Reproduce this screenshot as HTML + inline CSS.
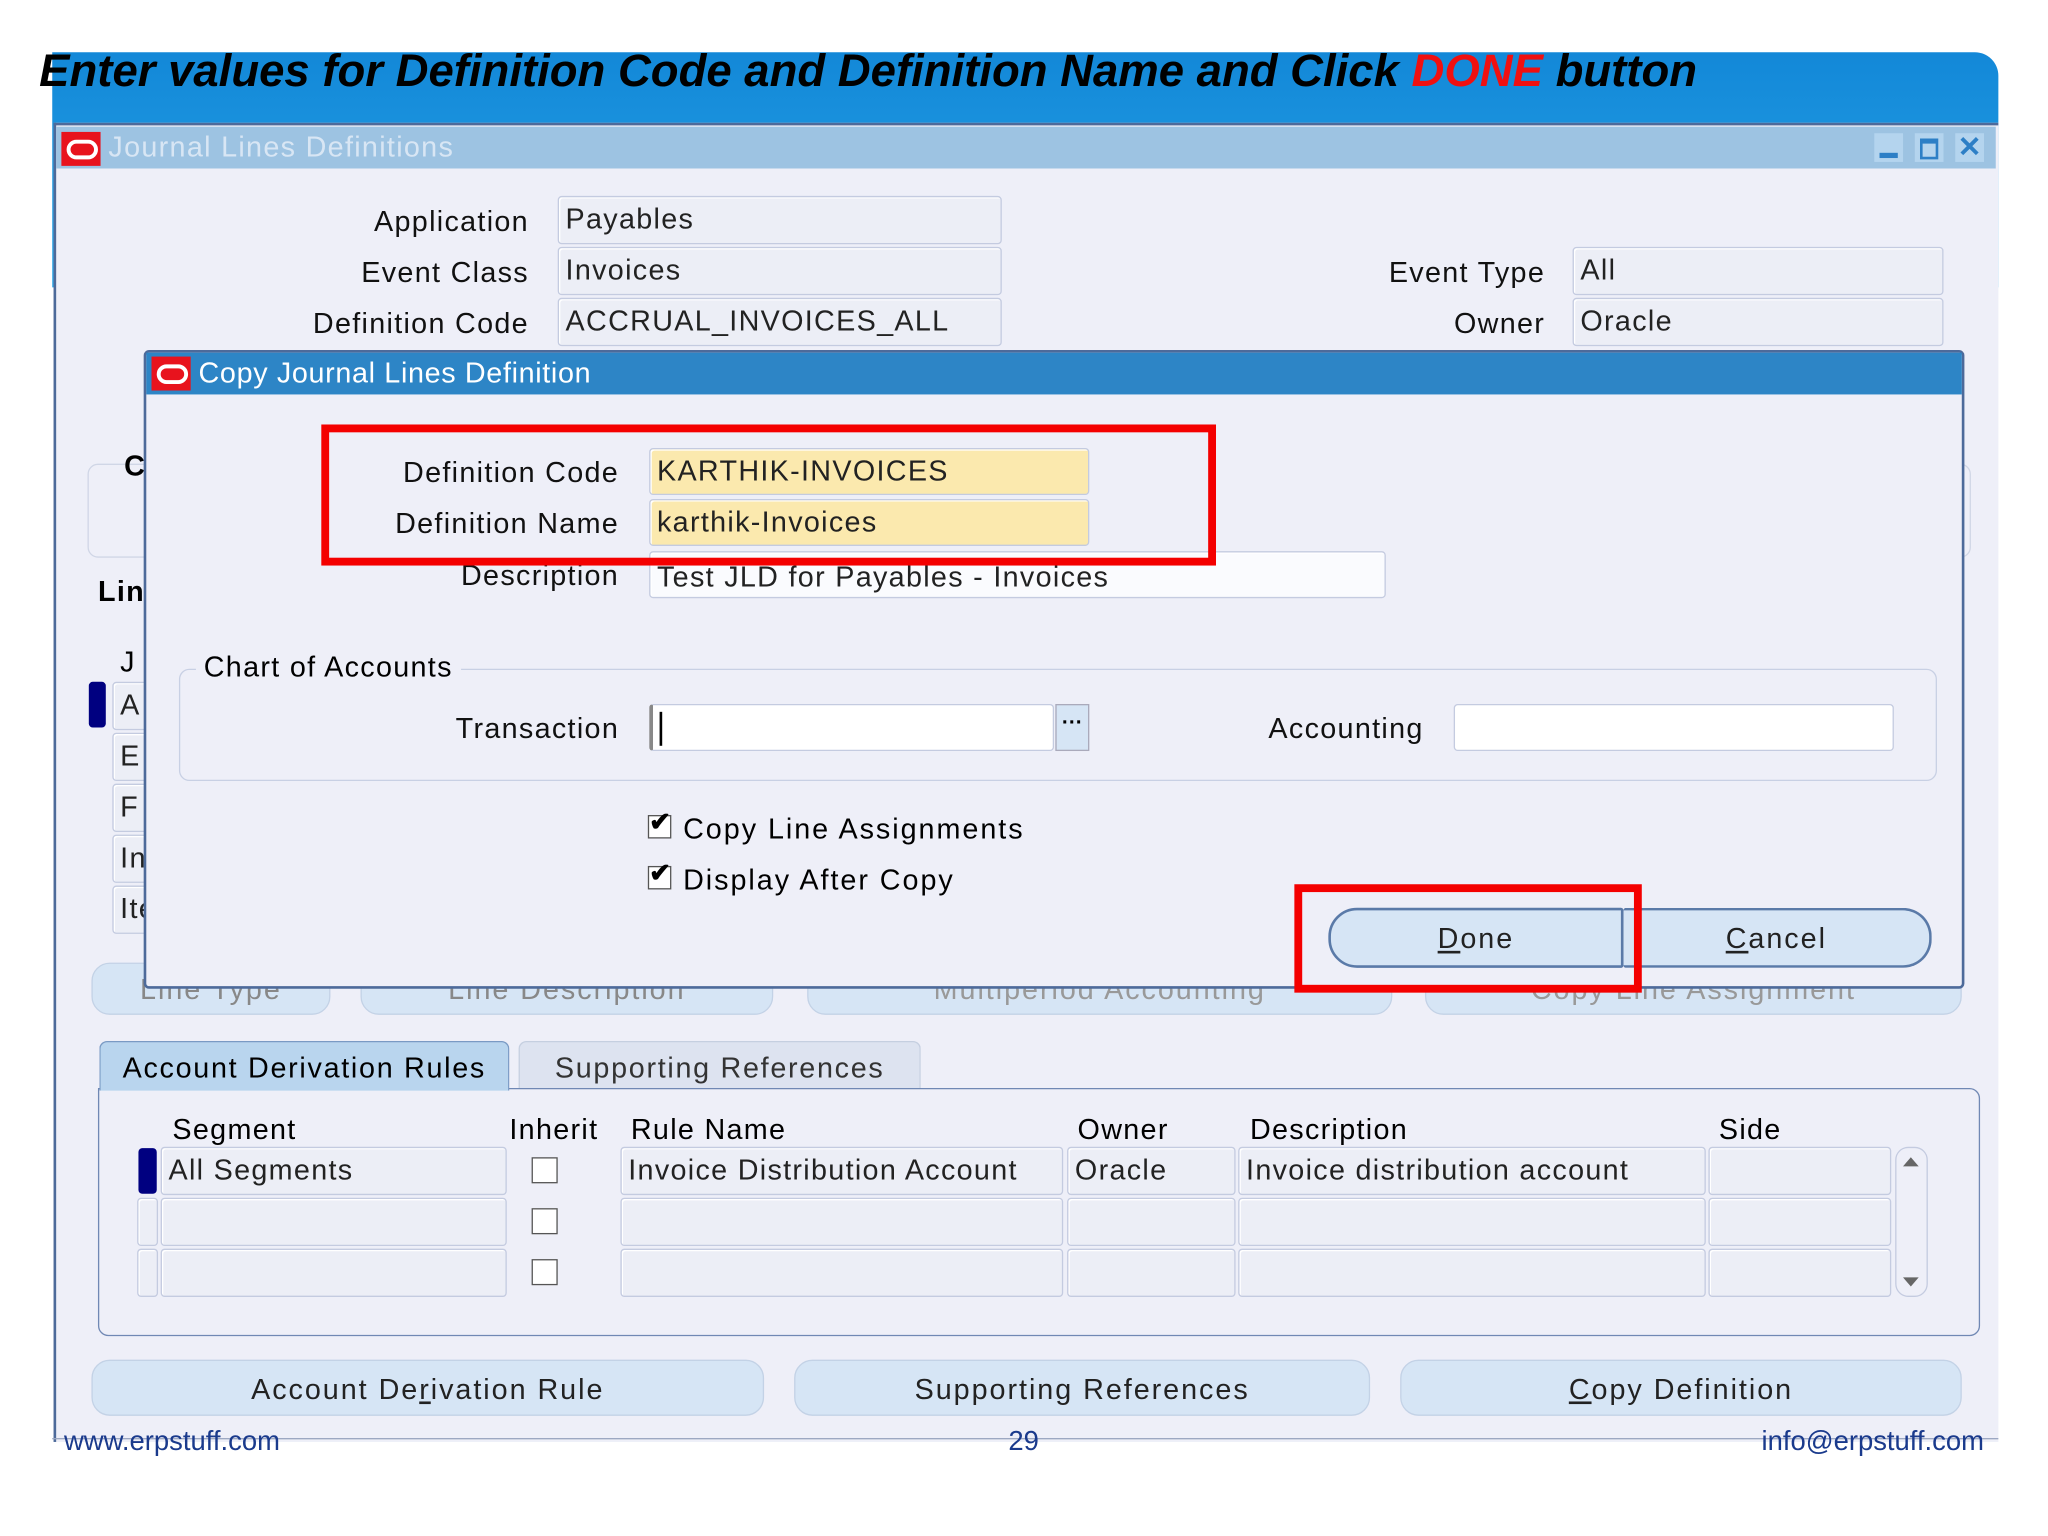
<!DOCTYPE html>
<html><head><meta charset="utf-8"><style>
html,body{margin:0;padding:0;background:#fff;width:2048px;height:1536px;overflow:hidden}
#w{position:absolute;left:0;top:0;width:1568px;height:1176px;transform:scale(1.30612);transform-origin:0 0;font-family:"Liberation Sans",sans-serif}
.a{position:absolute}
.lbl{position:absolute;font-size:22px;color:#111;letter-spacing:1px;white-space:nowrap;text-align:right}
.fld{position:absolute;background:#eceef6;border:1px solid #c4cbe0;border-radius:3px;box-shadow:inset 1px 1px 0 #fff;font-size:22px;letter-spacing:1px;color:#222;padding-left:5px;box-sizing:border-box;white-space:nowrap;overflow:hidden;line-height:34px}
.btn{position:absolute;background:#d6e5f5;border:1px solid #c3d2e6;border-radius:14px;font-size:22px;letter-spacing:1.5px;color:#222;text-align:center;box-sizing:border-box;white-space:nowrap;overflow:hidden}
.cb{position:absolute;width:18px;height:18px;border:1px solid #555;background:#fff;box-sizing:border-box}
</style></head><body><div id="w">
<!-- banner -->
<div class="a" style="left:40px;top:40px;width:1490px;height:180px;border-radius:0 18px 0 0;background:linear-gradient(#1388d8,#26a4e6)"></div>
<div class="a" style="left:30px;top:35px;font-size:35px;font-weight:bold;font-style:italic;color:#000;white-space:nowrap;transform:scaleX(0.995);transform-origin:0 0">Enter values for Definition Code and Definition Name and Click <span style="color:#f01010">DONE</span> button</div>
<!-- main window -->
<div class="a" style="left:41px;top:94px;width:1487px;height:1008px;background:#eeeff8;border-left:2px solid #4d6a9a;border-top:2px solid #4d6a9a"></div>
<div class="a" style="left:43px;top:97px;width:1485px;height:32px;background:#9dc3e2"></div>
<div class="a" style="left:47px;top:101px;width:30px;height:26px;background:#e8131d"><div style="margin:6px 4px;width:18px;height:9px;border:3px solid #fff;border-radius:8px"></div></div>
<div class="a" style="left:83px;top:100px;font-size:22px;color:#d8e6f4;letter-spacing:1px">Journal Lines Definitions</div>
<div class="a" style="left:1435px;top:102px;width:22px;height:22px;background:#b4d4ee"><div style="margin:15px 4px 0;height:4px;background:#2d7fc6"></div></div>
<div class="a" style="left:1466px;top:102px;width:22px;height:22px;background:#b4d4ee"><div style="margin:4px;height:10px;border:2px solid #2d7fc6;border-top-width:4px"></div></div>
<div class="a" style="left:1497px;top:102px;width:22px;height:22px;background:#b4d4ee;color:#2d7fc6;font-size:22px;font-weight:bold;text-align:center;line-height:22px">✕</div>
<div class="lbl" style="right:1163px;top:157px">Application</div>
<div class="lbl" style="right:1163px;top:196px">Event Class</div>
<div class="lbl" style="right:1163px;top:235px">Definition Code</div>
<div class="fld" style="left:427px;top:150px;width:340px;height:37px">Payables</div>
<div class="fld" style="left:427px;top:189px;width:340px;height:37px">Invoices</div>
<div class="fld" style="left:427px;top:228px;width:340px;height:37px">ACCRUAL_INVOICES_ALL</div>
<div class="lbl" style="right:385px;top:196px">Event Type</div>
<div class="lbl" style="right:385px;top:235px">Owner</div>
<div class="fld" style="left:1204px;top:189px;width:284px;height:37px">All</div>
<div class="fld" style="left:1204px;top:228px;width:284px;height:37px">Oracle</div>
<!-- background partial -->
<div class="a" style="left:67px;top:355px;width:1440px;height:70px;border:1px solid #d0d6e6;border-radius:8px"></div>
<div class="a" style="left:95px;top:344px;font-size:22px;font-weight:bold">C</div>
<div class="a" style="left:75px;top:440px;font-size:22px;font-weight:bold;letter-spacing:1px">Lin</div>
<div class="a" style="left:92px;top:494px;font-size:22px">J</div>
<div class="a" style="left:68px;top:522px;width:13px;height:35px;background:#000080;border-radius:3px"></div>
<div class="fld" style="left:86px;top:522px;width:40px;height:37px">A</div>
<div class="fld" style="left:86px;top:561px;width:40px;height:37px">E</div>
<div class="fld" style="left:86px;top:600px;width:40px;height:37px">F</div>
<div class="fld" style="left:86px;top:639px;width:40px;height:37px">In</div>
<div class="fld" style="left:86px;top:678px;width:40px;height:37px">Ite</div>
<div class="btn" style="left:70px;top:737px;width:183px;height:40px;line-height:40px;color:#888">Line Type</div>
<div class="btn" style="left:276px;top:737px;width:316px;height:40px;line-height:40px;color:#888">Line Description</div>
<div class="btn" style="left:618px;top:737px;width:448px;height:40px;line-height:40px;color:#999">Multiperiod Accounting</div>
<div class="btn" style="left:1091px;top:737px;width:411px;height:40px;line-height:40px;color:#999">Copy Line Assignment</div>
<!-- dialog -->
<div class="a" style="left:110px;top:268px;width:1394px;height:489px;background:#eeeff8;border:2px solid #4d6a9a;border-radius:4px;box-sizing:border-box"></div>
<div class="a" style="left:112px;top:270px;width:1390px;height:32px;background:#2d85c6"></div>
<div class="a" style="left:116px;top:273px;width:30px;height:26px;background:#e8131d"><div style="margin:6px 4px;width:18px;height:9px;border:3px solid #fff;border-radius:8px"></div></div>
<div class="a" style="left:152px;top:273px;font-size:22px;color:#fff;letter-spacing:0.5px">Copy Journal Lines Definition</div>
<div class="lbl" style="right:1094px;top:349px">Definition Code</div>
<div class="lbl" style="right:1094px;top:388px">Definition Name</div>
<div class="lbl" style="right:1094px;top:428px">Description</div>
<div class="fld" style="left:497px;top:343px;width:337px;height:36px;background:#fbe9ae;line-height:34px">KARTHIK-INVOICES</div>
<div class="fld" style="left:497px;top:382px;width:337px;height:36px;background:#fbe9ae;line-height:34px">karthik-Invoices</div>
<div class="fld" style="left:497px;top:422px;width:564px;height:36px;background:#fafbfe;line-height:38px">Test JLD for Payables - Invoices</div>
<div class="a" style="left:246px;top:325px;width:685px;height:108px;border:6px solid #f40000;box-sizing:border-box"></div>
<div class="a" style="left:137px;top:512px;width:1346px;height:86px;border:1px solid #c8d0e4;border-radius:8px;box-sizing:border-box"></div>
<div class="a" style="left:150px;top:498px;background:#eeeff8;padding:0 6px;font-size:22px;letter-spacing:1px">Chart of Accounts</div>
<div class="lbl" style="right:1094px;top:545px">Transaction</div>
<div class="fld" style="left:497px;top:539px;width:310px;height:36px;background:#fff;border-left:3px solid #888"><span style="display:inline-block;width:2px;height:26px;background:#000;vertical-align:middle"></span></div>
<div class="a" style="left:808px;top:539px;width:26px;height:36px;background:#d6e5f5;border:1px solid #aab;box-sizing:border-box;font-size:16px;font-weight:bold;text-align:center;line-height:28px">···</div>
<div class="lbl" style="right:478px;top:545px">Accounting</div>
<div class="fld" style="left:1113px;top:539px;width:337px;height:36px;background:#fff"></div>
<div class="cb" style="left:496px;top:624px"></div><div class="a" style="left:497px;top:617px;font-size:20px;font-weight:bold">✔</div>
<div class="cb" style="left:496px;top:663px"></div><div class="a" style="left:497px;top:656px;font-size:20px;font-weight:bold">✔</div>
<div class="a" style="left:523px;top:622px;font-size:22px;letter-spacing:1.5px">Copy Line Assignments</div>
<div class="a" style="left:523px;top:661px;font-size:22px;letter-spacing:1.5px">Display After Copy</div>
<div class="btn" style="left:1017px;top:695px;width:226px;height:46px;line-height:44px;border:2px solid #5a7aa8;border-radius:22px 2px 2px 22px"><u>D</u>one</div>
<div class="btn" style="left:1243px;top:695px;width:236px;height:46px;line-height:44px;border:2px solid #5a7aa8;border-left:none;border-radius:2px 22px 22px 2px"><u>C</u>ancel</div>
<div class="a" style="left:991px;top:677px;width:266px;height:83px;border:6px solid #f40000;box-sizing:border-box"></div>
<!-- tabs -->
<div class="a" style="left:75px;top:833px;width:1441px;height:190px;border:1px solid #7088b4;border-radius:0 8px 8px 8px;box-sizing:border-box"></div>
<div class="a" style="left:76px;top:797px;width:314px;height:38px;background:#b9d5ee;border:1px solid #7a9ac4;border-bottom:none;border-radius:6px 6px 0 0;box-sizing:border-box;font-size:22px;letter-spacing:1.3px;text-align:center;line-height:40px">Account Derivation Rules</div>
<div class="a" style="left:397px;top:797px;width:308px;height:36px;background:#dde3f0;border:1px solid #c5cfe0;border-bottom:none;border-radius:6px 6px 0 0;box-sizing:border-box;font-size:22px;letter-spacing:1.3px;text-align:center;line-height:40px;color:#333">Supporting References</div>
<div class="a" style="left:132px;top:852px;font-size:22px;letter-spacing:1px">Segment</div>
<div class="a" style="left:390px;top:852px;font-size:22px;letter-spacing:1px">Inherit</div>
<div class="a" style="left:483px;top:852px;font-size:22px;letter-spacing:1px">Rule Name</div>
<div class="a" style="left:825px;top:852px;font-size:22px;letter-spacing:1px">Owner</div>
<div class="a" style="left:957px;top:852px;font-size:22px;letter-spacing:1px">Description</div>
<div class="a" style="left:1316px;top:852px;font-size:22px;letter-spacing:1px">Side</div>
<div class="a" style="left:106px;top:879px;width:14px;height:35px;background:#000080;border-radius:3px"></div>
<div class="fld" style="left:105px;top:917px;width:16px;height:37px"></div>
<div class="fld" style="left:105px;top:956px;width:16px;height:37px"></div>
<div class="fld" style="left:123px;top:878px;width:265px;height:37px">All Segments</div>
<div class="fld" style="left:123px;top:917px;width:265px;height:37px"></div>
<div class="fld" style="left:123px;top:956px;width:265px;height:37px"></div>
<div class="cb" style="left:407px;top:886px;width:20px;height:20px;background:#fff"></div>
<div class="cb" style="left:407px;top:925px;width:20px;height:20px;background:#fff"></div>
<div class="cb" style="left:407px;top:964px;width:20px;height:20px;background:#fff"></div>
<div class="fld" style="left:475px;top:878px;width:339px;height:37px">Invoice Distribution Account</div>
<div class="fld" style="left:475px;top:917px;width:339px;height:37px"></div>
<div class="fld" style="left:475px;top:956px;width:339px;height:37px"></div>
<div class="fld" style="left:817px;top:878px;width:129px;height:37px">Oracle</div>
<div class="fld" style="left:817px;top:917px;width:129px;height:37px"></div>
<div class="fld" style="left:817px;top:956px;width:129px;height:37px"></div>
<div class="fld" style="left:948px;top:878px;width:358px;height:37px">Invoice distribution account</div>
<div class="fld" style="left:948px;top:917px;width:358px;height:37px"></div>
<div class="fld" style="left:948px;top:956px;width:358px;height:37px"></div>
<div class="fld" style="left:1308px;top:878px;width:140px;height:37px"></div>
<div class="fld" style="left:1308px;top:917px;width:140px;height:37px"></div>
<div class="fld" style="left:1308px;top:956px;width:140px;height:37px"></div>
<div class="a" style="left:1451px;top:878px;width:25px;height:115px;border:1px solid #c4cbe0;border-radius:10px;box-sizing:border-box"></div>
<div class="a" style="left:1457px;top:886px;width:0;height:0;border-left:6px solid transparent;border-right:6px solid transparent;border-bottom:7px solid #666"></div>
<div class="a" style="left:1457px;top:978px;width:0;height:0;border-left:6px solid transparent;border-right:6px solid transparent;border-top:7px solid #666"></div>
<div class="btn" style="left:70px;top:1041px;width:515px;height:43px;line-height:43px">Account De<u>r</u>ivation Rule</div>
<div class="btn" style="left:608px;top:1041px;width:441px;height:43px;line-height:43px">Supporting References</div>
<div class="btn" style="left:1072px;top:1041px;width:430px;height:43px;line-height:43px"><u>C</u>opy Definition</div>
<!-- footer -->
<div class="a" style="left:40px;top:1101px;width:1490px;height:1px;background:#9aa6c0"></div>
<div class="a" style="left:49px;top:1092px;font-size:21px;color:#1a3a8c">www.erpstuff.com</div>
<div class="a" style="left:772px;top:1092px;font-size:21px;color:#1a3a8c">29</div>
<div class="a" style="right:49px;top:1092px;font-size:21px;color:#1a3a8c">info@erpstuff.com</div>
</div></body></html>
